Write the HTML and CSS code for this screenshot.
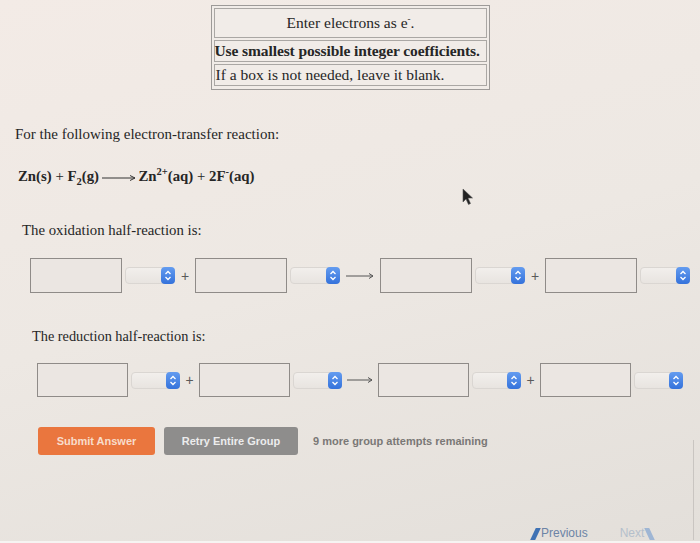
FILE: index.html
```html
<!DOCTYPE html>
<html>
<head>
<meta charset="utf-8">
<link rel="stylesheet" href="styles.css">
</head>
<body>
<div class="page">
  <div class="notes">
    <div class="note note-first">Enter electrons as e<sup>-</sup>.</div>
    <div class="note note-bold">Use smallest possible integer coefficients.</div>
    <div class="note">If a box is not needed, leave it blank.</div>
  </div>

  <p class="intro">For the following electron-transfer reaction:</p>
  <p class="reaction">Zn(s) <span class="op">+</span> F<sub>2</sub>(g) <svg class="rarrow" width="34" height="8" viewBox="0 0 34 8"><line x1="0" y1="4" x2="33" y2="4" stroke="#333" stroke-width="1"/><path d="M28 1.5 L33 4 L28 6.5" fill="none" stroke="#333" stroke-width="1"/></svg> Zn<sup>2+</sup>(aq) <span class="op">+</span> 2F<sup>-</sup>(aq)</p>

  <p class="label label-ox">The oxidation half-reaction is:</p>
  <div class="eq eq-ox">
    <div class="box"></div>
    <div class="sel"><span class="sel-btn"><svg width="8" height="11" viewBox="0 0 8 11"><path d="M1.5 4 L4 1.5 L6.5 4 M1.5 7 L4 9.5 L6.5 7" fill="none" stroke="#fff" stroke-width="1.3"/></svg></span></div>
    <span class="plus">+</span>
    <div class="box"></div>
    <div class="sel"><span class="sel-btn"><svg width="8" height="11" viewBox="0 0 8 11"><path d="M1.5 4 L4 1.5 L6.5 4 M1.5 7 L4 9.5 L6.5 7" fill="none" stroke="#fff" stroke-width="1.3"/></svg></span></div>
    <span class="arrow"><svg width="28" height="8" viewBox="0 0 28 8"><line x1="0" y1="4" x2="27" y2="4" stroke="#555" stroke-width="1"/><path d="M23 1.5 L27 4 L23 6.5" fill="none" stroke="#555" stroke-width="1"/></svg></span>
    <div class="box"></div>
    <div class="sel"><span class="sel-btn"><svg width="8" height="11" viewBox="0 0 8 11"><path d="M1.5 4 L4 1.5 L6.5 4 M1.5 7 L4 9.5 L6.5 7" fill="none" stroke="#fff" stroke-width="1.3"/></svg></span></div>
    <span class="plus">+</span>
    <div class="box"></div>
    <div class="sel"><span class="sel-btn"><svg width="8" height="11" viewBox="0 0 8 11"><path d="M1.5 4 L4 1.5 L6.5 4 M1.5 7 L4 9.5 L6.5 7" fill="none" stroke="#fff" stroke-width="1.3"/></svg></span></div>
  </div>

  <p class="label label-red">The reduction half-reaction is:</p>
  <div class="eq eq-red">
    <div class="box"></div>
    <div class="sel"><span class="sel-btn"><svg width="8" height="11" viewBox="0 0 8 11"><path d="M1.5 4 L4 1.5 L6.5 4 M1.5 7 L4 9.5 L6.5 7" fill="none" stroke="#fff" stroke-width="1.3"/></svg></span></div>
    <span class="plus">+</span>
    <div class="box"></div>
    <div class="sel"><span class="sel-btn"><svg width="8" height="11" viewBox="0 0 8 11"><path d="M1.5 4 L4 1.5 L6.5 4 M1.5 7 L4 9.5 L6.5 7" fill="none" stroke="#fff" stroke-width="1.3"/></svg></span></div>
    <span class="arrow"><svg width="26" height="8" viewBox="0 0 26 8"><line x1="0" y1="4" x2="25" y2="4" stroke="#555" stroke-width="1"/><path d="M21 1.5 L25 4 L21 6.5" fill="none" stroke="#555" stroke-width="1"/></svg></span>
    <div class="box"></div>
    <div class="sel"><span class="sel-btn"><svg width="8" height="11" viewBox="0 0 8 11"><path d="M1.5 4 L4 1.5 L6.5 4 M1.5 7 L4 9.5 L6.5 7" fill="none" stroke="#fff" stroke-width="1.3"/></svg></span></div>
    <span class="plus">+</span>
    <div class="box"></div>
    <div class="sel"><span class="sel-btn"><svg width="8" height="11" viewBox="0 0 8 11"><path d="M1.5 4 L4 1.5 L6.5 4 M1.5 7 L4 9.5 L6.5 7" fill="none" stroke="#fff" stroke-width="1.3"/></svg></span></div>
  </div>

  <div class="actions">
    <button class="btn btn-submit">Submit Answer</button>
    <button class="btn btn-retry">Retry Entire Group</button>
    <span class="attempts">9 more group attempts remaining</span>
  </div>

  <div class="nav">
    <span class="nav-prev"><span class="chev chev-prev"></span>Previous</span>
    <span class="nav-next">Next<span class="chev chev-next"></span></span>
  </div>

  <svg class="cursor" width="12" height="18" viewBox="0 0 12 18"><path d="M1 1 L1 14 L4 11 L6.5 16.5 L8.5 15.5 L6 10 L10.5 10 Z" fill="#222" stroke="#555" stroke-width="0.6"/></svg>
</div>
</body>
</html>
```

FILE: styles.css
```css
html, body {
  margin: 0;
  padding: 0;
  background: #f3f1ee;
}

.page {
  position: relative;
  width: 700px;
  height: 541px;
  overflow: hidden;
  border-bottom: 2px solid #f6f4f2;
  background: linear-gradient(165deg, #f3ebe6 0%, #ede8e3 50%, #e3dfda 100%);
  font-family: "Liberation Serif", "Times New Roman", serif;
  color: #262626;
}

.page::after {
  content: "";
  position: absolute;
  left: 693px;
  top: 440px;
  width: 1px;
  height: 100px;
  background: #c9c5c1;
}

.notes {
  width: 279px;
  height: 85px;
  box-sizing: border-box;
  margin: 5px auto 0;
  border: 1px solid #9d9a98;
  padding: 2px;
  background: #f1ece8;
}

.note {
  box-sizing: border-box;
  height: 22px;
  line-height: 20px;
  border: 1px solid #aaa7a4;
  margin-top: 2px;
  padding-left: 1px;
  font-size: 15.5px;
  white-space: nowrap;
}

.note-first {
  height: 30px;
  line-height: 28px;
  margin-top: 0;
  text-align: center;
}

.note-bold {
  font-weight: bold;
  padding-left: 0;
  letter-spacing: -0.1px;
}

.note sup {
  font-size: 9px;
  line-height: 0;
}

.intro {
  margin: 35px 0 0;
  padding-left: 15px;
  font-size: 15px;
  line-height: 18px;
}

.reaction {
  margin: 24px 0 0;
  padding-left: 18px;
  font-size: 14.8px;
  font-weight: bold;
  line-height: 18px;
  white-space: nowrap;
}

.reaction .op {
  font-weight: normal;
}

.reaction sub, .reaction sup {
  font-size: 10.5px;
  line-height: 0;
}

.rarrow {
  vertical-align: middle;
  margin: 0 -1px;
}

.label {
  margin: 0;
  font-size: 14.6px;
  line-height: 18px;
}

.label-ox {
  margin-top: 36px;
  padding-left: 22px;
  font-size: 14.8px;
}

.label-red {
  margin-top: 34px;
  padding-left: 32px;
  font-size: 14.3px;
}

.eq {
  display: flex;
  align-items: center;
}

.eq-ox {
  margin-top: 19px;
  padding-left: 30px;
  height: 35px;
}

.eq-red {
  margin-top: 18px;
  padding-left: 37px;
  height: 34px;
}

.box {
  box-sizing: border-box;
  width: 92px;
  height: 35px;
  border: 1px solid #8f8b88;
  background: #ebe6e2;
}

.eq-red .box {
  width: 91px;
  height: 34px;
}

.sel {
  box-sizing: border-box;
  width: 50px;
  height: 17px;
  margin-left: 3px;
  border: 1px solid #dad6d2;
  border-radius: 4px;
  background: linear-gradient(#f2efec, #e8e4e0);
  display: flex;
  justify-content: flex-end;
}

.eq-red .sel {
  width: 49px;
}

.sel-btn {
  width: 14px;
  height: 17px;
  margin: -1px -1px -1px 0;
  border-radius: 4px;
  background: linear-gradient(#649cf0, #3472db);
  display: flex;
  align-items: center;
  justify-content: center;
}

.sel-btn svg {
  display: block;
}

.plus {
  width: 20px;
  text-align: center;
  font-family: "Liberation Sans", Arial, sans-serif;
  font-size: 14px;
  color: #5a5a5a;
}

.eq-red .plus {
  width: 19px;
}

.arrow {
  width: 40px;
  display: flex;
  justify-content: center;
}

.eq-red .arrow {
  width: 36px;
}

.arrow svg {
  display: block;
}

.actions {
  margin-top: 29px;
  padding-left: 38px;
  display: flex;
  align-items: center;
  height: 29px;
}

.btn {
  height: 28px;
  border: none;
  border-radius: 3px;
  padding: 0;
  font-family: "Liberation Sans", Arial, sans-serif;
  font-weight: bold;
  font-size: 11px;
}

.btn-submit {
  width: 117px;
  background: #ea763e;
  color: #f8dccb;
}

.btn-retry {
  width: 134px;
  margin-left: 9px;
  background: #8e8d8c;
  color: #ececec;
}

.attempts {
  margin-left: 15px;
  font-family: "Liberation Sans", Arial, sans-serif;
  font-weight: bold;
  font-size: 11px;
  color: #7a7876;
}

.nav {
  margin-top: 72px;
  padding-left: 533px;
  display: flex;
  align-items: center;
  font-family: "Liberation Sans", Arial, sans-serif;
  font-size: 12px;
  line-height: 13px;
}

.nav-prev {
  color: #6c84a6;
  display: flex;
  align-items: center;
}

.nav-next {
  margin-left: 32px;
  color: #b5bfcc;
  display: flex;
  align-items: center;
}

.chev {
  display: inline-block;
  width: 5px;
  height: 12px;
  background: #3f72b4;
}

.chev-prev {
  margin-right: 3px;
  transform: skewX(-25deg);
}

.chev-next {
  margin-left: 3px;
  background: #9fb6d4;
  transform: skewX(25deg);
}

.cursor {
  position: absolute;
  left: 462px;
  top: 188px;
}
```
